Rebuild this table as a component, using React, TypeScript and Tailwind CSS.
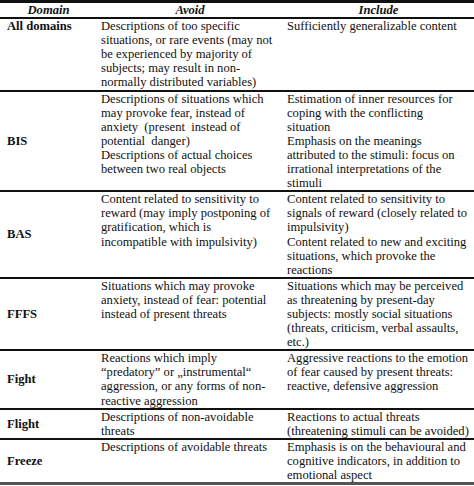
import { Fragment } from 'react';

interface Row {
  domain: string;
  top?: boolean;
  avoid: string[];
  include: string[];
}

const rows: Row[] = [
  {
    domain: 'All domains',
    top: true,
    avoid: [
      'Descriptions of too specific',
      'situations, or rare events (may not',
      'be experienced by majority of',
      'subjects; may result in non-',
      'normally distributed variables)',
    ],
    include: ['Sufficiently generalizable content'],
  },
  {
    domain: 'BIS',
    avoid: [
      'Descriptions of situations which',
      'may provoke fear, instead of',
      'anxiety  (present  instead of',
      'potential  danger)',
      'Descriptions of actual choices',
      'between two real objects',
    ],
    include: [
      'Estimation of inner resources for',
      'coping with the conflicting',
      'situation',
      'Emphasis on the meanings',
      'attributed to the stimuli: focus on',
      'irrational interpretations of the',
      'stimuli',
    ],
  },
  {
    domain: 'BAS',
    avoid: [
      'Content related to sensitivity to',
      'reward (may imply postponing of',
      'gratification, which is',
      'incompatible with impulsivity)',
    ],
    include: [
      'Content related to sensitivity to',
      'signals of reward (closely related to',
      'impulsivity)',
      'Content related to new and exciting',
      'situations, which provoke the',
      'reactions',
    ],
  },
  {
    domain: 'FFFS',
    avoid: [
      'Situations which may provoke',
      'anxiety, instead of fear: potential',
      'instead of present threats',
    ],
    include: [
      'Situations which may be perceived',
      'as threatening by present-day',
      'subjects: mostly social situations',
      '(threats, criticism, verbal assaults,',
      'etc.)',
    ],
  },
  {
    domain: 'Fight',
    avoid: [
      'Reactions which imply',
      '\u201Cpredatory\u201D or \u201Einstrumental\u201C',
      'aggression, or any forms of non-',
      'reactive aggression',
    ],
    include: [
      'Aggressive reactions to the emotion',
      'of fear caused by present threats:',
      'reactive, defensive aggression',
    ],
  },
  {
    domain: 'Flight',
    avoid: ['Descriptions of non-avoidable', 'threats'],
    include: ['Reactions to actual threats', '(threatening stimuli can be avoided)'],
  },
  {
    domain: 'Freeze',
    avoid: ['Descriptions of avoidable threats'],
    include: [
      'Emphasis is on the behavioural and',
      'cognitive indicators, in addition to',
      'emotional aspect',
    ],
  },
];

function Lines({ items }: { items: string[] }) {
  return (
    <>
      {items.map((t, i) => (
        <Fragment key={i}>
          {t}
          {i < items.length - 1 && <br />}
        </Fragment>
      ))}
    </>
  );
}

export default function App() {
  return (
    <div className="w-[474px] h-[486px] bg-white text-[#111] text-[12.6px] leading-[14.1px] overflow-hidden whitespace-pre font-['Liberation_Serif','Times_New_Roman',serif]">
      <div className="border-t-[3px] border-[#111]">
        <div className="grid grid-cols-[97px_186px_191px] border-b-2 border-[#111] font-bold italic">
          <div className="text-center">Domain</div>
          <div className="text-center">Avoid</div>
          <div className="text-center">Include</div>
        </div>
        {rows.map((r, i) => (
          <div
            key={r.domain}
            className={
              i === rows.length - 1
                ? 'grid grid-cols-[97px_186px_191px] border-b-[3px] border-[#555]'
                : 'grid grid-cols-[97px_186px_191px] border-b-2 border-[#111]'
            }
          >
            <div className={r.top ? 'pl-[7px] font-bold' : 'pl-[7px] font-bold flex items-center'}>
              {r.domain}
            </div>
            <div className="pl-[4px]">
              <Lines items={r.avoid} />
            </div>
            <div className="pl-[4px]">
              <Lines items={r.include} />
            </div>
          </div>
        ))}
      </div>
    </div>
  );
}
